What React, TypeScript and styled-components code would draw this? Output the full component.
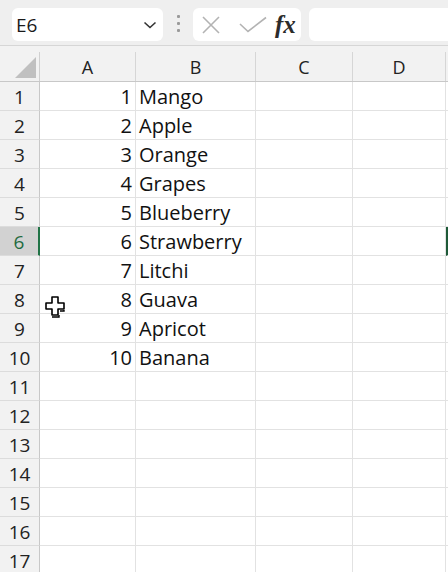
import styled, { createGlobalStyle } from "styled-components";

const GlobalStyle = createGlobalStyle`
  html, body {
    margin: 0;
    padding: 0;
    background: #ffffff;
  }
  body {
    font-family: "Open Sans", "Noto Sans", sans-serif;
  }
`;

const COLS = "40px 96px 120px 97px 93px 2px";

const Sheet = styled.div`
  position: relative;
  width: 448px;
  height: 572px;
  overflow: hidden;
  background: #ffffff;
`;

const Toolbar = styled.div`
  display: flex;
  align-items: flex-start;
  height: 46px;
  padding: 8px 0 0 12px;
  background: #efefef;
  border-bottom: 1px solid #d6d6d6;
  box-sizing: border-box;
`;

const NameBox = styled.div`
  display: flex;
  align-items: center;
  justify-content: space-between;
  width: 151px;
  height: 33px;
  padding: 0 6px 0 4px;
  box-sizing: border-box;
  background: #ffffff;
  border-radius: 6px;
  font-size: 19px;
  color: #1a1a1a;
`;

const Grip = styled.div`
  display: flex;
  flex-direction: column;
  gap: 4px;
  margin: 7px 13px 0 14px;
  span {
    width: 3px;
    height: 3px;
    background: #9a9a9a;
    border-radius: 1px;
  }
`;

const FormulaButtons = styled.div`
  display: flex;
  align-items: center;
  width: 108px;
  height: 33px;
  padding: 0 0 0 8px;
  box-sizing: border-box;
  gap: 18px;
  background: #ffffff;
  border-radius: 6px;
`;

const Fx = styled.span`
  font-family: "Liberation Serif", "DejaVu Serif", serif;
  font-style: italic;
  font-weight: 700;
  font-size: 25px;
  color: #2b2b2b;
  margin-left: -10px;
  letter-spacing: 0;
`;

const FormulaInput = styled.div`
  flex: 1;
  height: 33px;
  margin-left: 8px;
  background: #ffffff;
  border-radius: 6px 0 0 6px;
`;

const HeaderRow = styled.div`
  display: grid;
  grid-template-columns: ${COLS};
  padding-top: 6px;
  background: #f2f2f2;
  border-bottom: 1px solid #c8c8c8;
`;

const Corner = styled.div`
  position: relative;
  height: 29px;
  border-right: 1px solid #d0d0d0;
  svg {
    position: absolute;
    right: 3px;
    bottom: 3px;
  }
`;

const ColHead = styled.div`
  height: 29px;
  display: flex;
  align-items: center;
  justify-content: center;
  font-size: 18px;
  color: #222222;
  border-right: 1px solid #d6d6d6;
`;

const Grid = styled.div`
  display: grid;
  grid-template-columns: ${COLS};
  grid-auto-rows: 29px;
`;

const RowHead = styled.div<{ $active?: boolean }>`
  display: flex;
  align-items: center;
  justify-content: center;
  font-size: 19px;
  padding-top: 1px;
  box-sizing: border-box;
  background: ${(p) => (p.$active ? "#d2d2d2" : "#f2f2f2")};
  color: ${(p) => (p.$active ? "#1f6b40" : "#222222")};
  border-bottom: 1px solid #dcdcdc;
  border-right: ${(p) => (p.$active ? "2px solid #217346" : "1px solid #c8c8c8")};
`;

const Cell = styled.div<{ $align?: "left" | "right" }>`
  display: flex;
  align-items: center;
  justify-content: ${(p) => (p.$align === "right" ? "flex-end" : "flex-start")};
  padding: 1px 3px 0 3px;
  box-sizing: border-box;
  font-size: 20px;
  color: #111111;
  white-space: nowrap;
  border-right: 1px solid #e2e2e2;
  border-bottom: 1px solid #e2e2e2;
`;

const EdgeCell = styled.div<{ $selected?: boolean }>`
  border-bottom: 1px solid #e2e2e2;
  border-left: ${(p) => (p.$selected ? "2px solid #1e5a38" : "none")};
`;

const Cursor = styled.svg`
  position: absolute;
  left: 44px;
  top: 296px;
`;

const fruits = [
  "Mango",
  "Apple",
  "Orange",
  "Grapes",
  "Blueberry",
  "Strawberry",
  "Litchi",
  "Guava",
  "Apricot",
  "Banana",
];

const rows = Array.from({ length: 17 }, (_, i) => i + 1);

export default function App() {
  return (
    <>
      <GlobalStyle />
      <Sheet>
        <Toolbar>
          <NameBox>
            <span>E6</span>
            <svg width="14" height="10" viewBox="0 0 14 10">
              <polyline points="1.5,2.5 7,7.5 12.5,2.5" fill="none" stroke="#333" strokeWidth="1.6" />
            </svg>
          </NameBox>
          <Grip>
            <span />
            <span />
            <span />
          </Grip>
          <FormulaButtons>
            <svg width="20" height="20" viewBox="0 0 20 20">
              <path d="M2 2 L18 18 M18 2 L2 18" stroke="#b3b3b3" strokeWidth="1.6" fill="none" />
            </svg>
            <svg width="28" height="18" viewBox="0 0 28 18">
              <polyline points="1,8 9,15.5 27,1.5" fill="none" stroke="#b3b3b3" strokeWidth="1.6" />
            </svg>
            <Fx>fx</Fx>
          </FormulaButtons>
          <FormulaInput />
        </Toolbar>

        <HeaderRow>
          <Corner>
            <svg width="21" height="21" viewBox="0 0 21 21">
              <polygon points="21,0 21,21 0,21" fill="#c0c0c0" />
            </svg>
          </Corner>
          <ColHead>A</ColHead>
          <ColHead>B</ColHead>
          <ColHead>C</ColHead>
          <ColHead>D</ColHead>
          <div />
        </HeaderRow>

        <Grid>
          {rows.map((r) => (
            <Row key={r} n={r} />
          ))}
        </Grid>

        <Cursor width="24" height="24" viewBox="0 0 24 24">
          <path
            d="M9 2 H15 V8 H21 V14 H15 V20 H9 V14 H3 V8 H9 Z"
            fill="#ffffff"
            stroke="#000000"
            strokeWidth="1.6"
            strokeLinejoin="round"
            transform="translate(-1 -1)"
          />
          <path d="M15 19 V21 H8 M20 14 V15 H16" stroke="#000" strokeWidth="1.4" fill="none" />
        </Cursor>
      </Sheet>
    </>
  );
}

function Row({ n }: { n: number }) {
  const fruit = fruits[n - 1];
  return (
    <>
      <RowHead $active={n === 6}>{n}</RowHead>
      <Cell $align="right">{fruit ? n : ""}</Cell>
      <Cell>{fruit ?? ""}</Cell>
      <Cell />
      <Cell />
      <EdgeCell $selected={n === 6} />
    </>
  );
}
